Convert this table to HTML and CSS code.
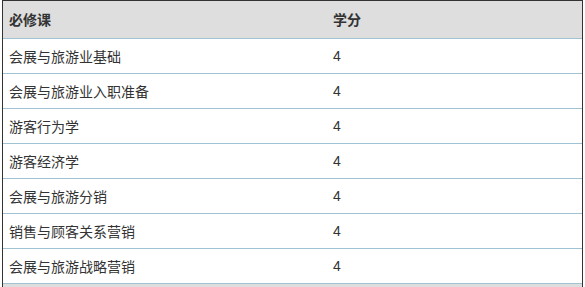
FILE: index.html
```html
<!DOCTYPE html>
<html>
<head>
<meta charset="utf-8">
<link rel="stylesheet" href="styles.css">
</head>
<body>
<div class="frame">
<table class="courses">
  <colgroup>
    <col class="col1">
    <col class="col2">
  </colgroup>
  <thead>
    <tr><th>必修课</th><th>学分</th></tr>
  </thead>
  <tbody>
    <tr><td>会展与旅游业基础</td><td>4</td></tr>
    <tr><td>会展与旅游业入职准备</td><td>4</td></tr>
    <tr><td>游客行为学</td><td>4</td></tr>
    <tr><td>游客经济学</td><td>4</td></tr>
    <tr><td>会展与旅游分销</td><td>4</td></tr>
    <tr><td>销售与顾客关系营销</td><td>4</td></tr>
    <tr><td>会展与旅游战略营销</td><td>4</td></tr>
  </tbody>
  <tfoot>
    <tr><td></td><td></td></tr>
  </tfoot>
</table>
</div>
</body>
</html>
```
FILE: styles.css
```css
html, body {
  margin: 0;
  padding: 0;
  background: #fff;
}
.frame {
  margin-left: 2px;
  width: 581px;
  border-top: 1px solid #333;
  border-left: 1px solid #333;
  border-right: 1px solid #333;
  box-sizing: border-box;
  height: 287px;
  overflow: hidden;
}
.courses {
  width: 100%;
  table-layout: fixed;
  border-collapse: collapse;
  font-family: "Liberation Sans", "Noto Sans CJK SC", sans-serif;
  font-size: 14px;
  color: #333;
}
.col1 {
  width: 324px;
}
.courses th {
  background: #dedede;
  text-align: left;
  font-weight: bold;
  height: 37px;
  padding: 0 6px;
  border-bottom: 1px solid #9fc3d3;
  box-sizing: border-box;
}
.courses td {
  height: 35px;
  padding: 0 6px;
  border-bottom: 1px solid #9fc3d3;
  box-sizing: border-box;
  background: #fff;
}
.courses tfoot td {
  background: #dedede;
  border-bottom: none;
}
```
